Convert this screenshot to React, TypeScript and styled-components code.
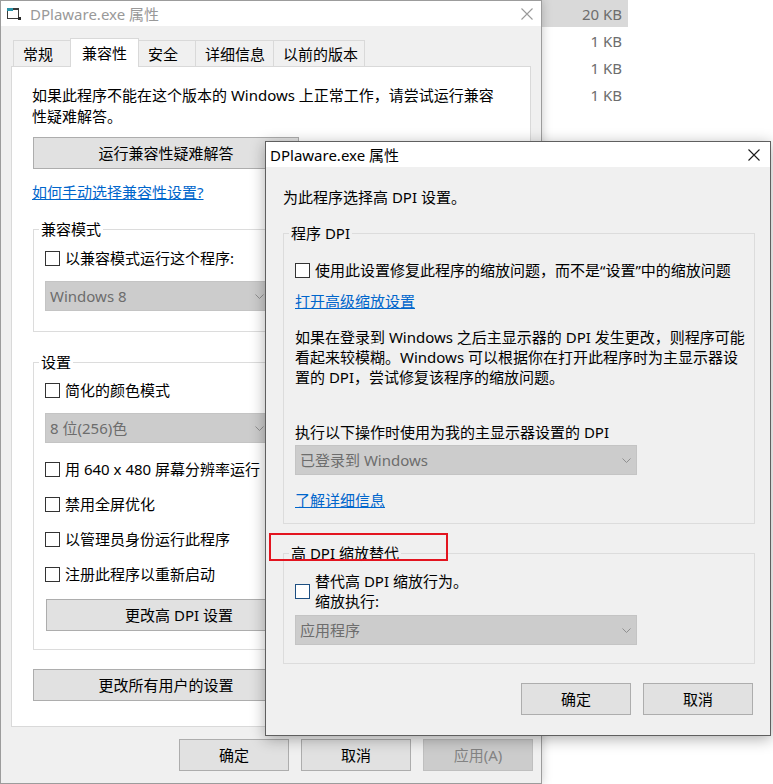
import React from "react";
import styled, { createGlobalStyle } from "styled-components";

const FONT = `"Noto Sans", "Noto Sans CJK SC", sans-serif`;

const GlobalStyle = createGlobalStyle`
  html, body { margin: 0; padding: 0; background: #fff; }
  body { font-family: ${FONT}; font-size: 15px; color: #000; }
  * { box-sizing: border-box; }
`;

const Desktop = styled.div`
  position: relative;
  width: 773px;
  height: 784px;
  overflow: hidden;
  background: #fff;
  font-family: ${FONT};
  font-size: 15px;
  line-height: 20px;
  color: #000;
`;

const FileList = styled.div`
  position: absolute;
  left: 480px;
  top: 0;
  width: 148px;
  display: flex;
  flex-direction: column;
`;

const FileRow = styled.div<{ $selected?: boolean }>`
  height: 27px;
  display: flex;
  align-items: center;
  justify-content: flex-end;
  padding: 1px 6px 0 0;
  color: #6d6d6d;
  background: ${(p) => (p.$selected ? "#d9d9d9" : "transparent")};
`;

const Window = styled.div<{ $x: number; $y: number; $w: number; $h: number; $active?: boolean }>`
  position: absolute;
  left: ${(p) => p.$x}px;
  top: ${(p) => p.$y}px;
  width: ${(p) => p.$w}px;
  height: ${(p) => p.$h}px;
  display: flex;
  flex-direction: column;
  background: #f0f0f0;
  border: 1px solid ${(p) => (p.$active ? "#5f5f5f" : "#9c9c9c")};
  box-shadow: ${(p) =>
    p.$active ? "0 3px 14px rgba(0,0,0,0.32)" : "0 0 10px rgba(0,0,0,0.22)"};
`;

const TitleBar = styled.div<{ $pl: number }>`
  height: 25px;
  flex: none;
  background: #fff;
  display: flex;
  align-items: center;
  padding-left: ${(p) => p.$pl}px;
`;

const TitleText = styled.span<{ $active?: boolean }>`
  flex: 1;
  color: ${(p) => (p.$active ? "#000" : "#999")};
  white-space: nowrap;
  line-height: 20px;
`;

const TitleIcon = styled.svg`
  width: 15px;
  height: 13px;
  margin-right: 9px;
  flex: none;
`;

const CloseGlyph = styled.svg<{ $mr: number }>`
  width: 12px;
  height: 12px;
  margin-right: ${(p) => p.$mr}px;
  flex: none;
`;

const MainBody = styled.div`
  flex: 1;
  display: flex;
  flex-direction: column;
  padding: 12px 10px 0 10px;
`;

const TabRow = styled.div`
  display: flex;
  align-items: flex-end;
  height: 29px;
  padding-left: 2px;
  margin-bottom: -1px;
  position: relative;
  z-index: 1;
`;

const Tab = styled.div<{ $w: number; $active?: boolean }>`
  width: ${(p) => p.$w}px;
  height: ${(p) => (p.$active ? 29 : 27)}px;
  margin-left: -1px;
  &:first-child { margin-left: 0; }
  display: flex;
  align-items: center;
  padding-left: ${(p) => (p.$active ? 11 : 9)}px;
  padding-bottom: ${(p) => (p.$active ? 1 : 0)}px;
  white-space: nowrap;
  background: ${(p) => (p.$active ? "#fff" : "#f0f0f0")};
  border: 1px solid #d9d9d9;
  border-bottom: ${(p) => (p.$active ? "none" : "1px solid #d9d9d9")};
  position: relative;
  z-index: ${(p) => (p.$active ? 2 : 1)};
`;

const TabPanel = styled.div`
  height: 661px;
  flex: none;
  background: #fff;
  border: 1px solid #d9d9d9;
  padding: 18px 20px 0 20px;
  display: flex;
  flex-direction: column;
  align-items: flex-start;
`;

const Text = styled.div<{ $mt?: number; $lh?: number }>`
  margin-top: ${(p) => p.$mt ?? 0}px;
  line-height: ${(p) => p.$lh ?? 20}px;
  white-space: nowrap;
`;

const Link = styled.a<{ $mt?: number }>`
  margin-top: ${(p) => p.$mt ?? 0}px;
  line-height: 20px;
  color: #0066cc;
  text-decoration: underline;
  cursor: pointer;
  white-space: nowrap;
`;

const PushButton = styled.button<{ $w: number; $mt?: number; $ml?: number }>`
  width: ${(p) => p.$w}px;
  height: 32px;
  flex: none;
  margin: ${(p) => p.$mt ?? 0}px 0 0 ${(p) => p.$ml ?? 0}px;
  padding: 0;
  background: #e1e1e1;
  border: 1px solid #adadad;
  font-family: inherit;
  font-size: 15px;
  line-height: 20px;
  color: #000;
  white-space: nowrap;
  &:disabled {
    background: #cccccc;
    border-color: #bfbfbf;
    color: #838383;
  }
`;

const Group = styled.fieldset<{ $mt: number; $ml?: number }>`
  margin: ${(p) => p.$mt}px 0 0 ${(p) => p.$ml ?? 0}px;
  padding: 0;
  border: 1px solid #dcdcdc;
  min-width: 0;
  align-self: stretch;
`;

const Legend = styled.legend`
  margin-left: 5px;
  padding: 0 2px;
  height: 20px;
  line-height: 20px;
  white-space: nowrap;
`;

const GroupBody = styled.div<{ $pt: number; $pb: number }>`
  display: flex;
  flex-direction: column;
  align-items: flex-start;
  padding: ${(p) => p.$pt}px 11px ${(p) => p.$pb}px 11px;
`;

const CheckRow = styled.label<{ $mt?: number }>`
  display: flex;
  align-items: center;
  gap: 5px;
  margin-top: ${(p) => p.$mt ?? 0}px;
  line-height: 20px;
  white-space: nowrap;
`;

const CheckBox = styled.span<{ $focus?: boolean }>`
  width: 15px;
  height: 15px;
  flex: none;
  background: #fff;
  border: 1px solid ${(p) => (p.$focus ? "#1d4f82" : "#333")};
`;

const Combo = styled.div<{ $w: number; $mt?: number }>`
  width: ${(p) => p.$w}px;
  height: 30px;
  flex: none;
  margin-top: ${(p) => p.$mt ?? 0}px;
  background: #cccccc;
  border: 1px solid #c4c4c4;
  display: flex;
  align-items: center;
  justify-content: space-between;
  padding: 0 5px 0 4px;
  color: #6d6d6d;
  white-space: nowrap;
`;

const Chevron = styled.svg`
  width: 9px;
  height: 5px;
  flex: none;
`;

const Footer = styled.div<{ $mt: number; $mr: number }>`
  align-self: stretch;
  display: flex;
  justify-content: flex-end;
  gap: 12px;
  margin-top: ${(p) => p.$mt}px;
  margin-right: ${(p) => p.$mr}px;
`;

const DialogBody = styled.div`
  flex: 1;
  display: flex;
  flex-direction: column;
  align-items: flex-start;
  padding: 20px 15px 0 17px;
`;

const Highlight = styled.div`
  position: absolute;
  left: 269px;
  top: 533px;
  width: 179px;
  height: 28px;
  border: 2px solid #e3141f;
  pointer-events: none;
`;

const ComboBox = ({ value, w, mt }: { value: string; w: number; mt?: number }) => (
  <Combo $w={w} $mt={mt}>
    <span>{value}</span>
    <Chevron viewBox="0 0 9 5">
      <polyline points="0.5,0.5 4.5,4.5 8.5,0.5" fill="none" stroke="#8f8f8f" strokeWidth="1" />
    </Chevron>
  </Combo>
);

const Close = ({ color, mr }: { color: string; mr: number }) => (
  <CloseGlyph $mr={mr} viewBox="0 0 12 12">
    <path d="M0.5 0.5 L11.5 11.5 M11.5 0.5 L0.5 11.5" stroke={color} strokeWidth="1.1" fill="none" />
  </CloseGlyph>
);

export default function App() {
  return (
    <>
      <GlobalStyle />
      <Desktop>
        <FileList>
          <FileRow $selected>20 KB</FileRow>
          <FileRow>1 KB</FileRow>
          <FileRow>1 KB</FileRow>
          <FileRow>1 KB</FileRow>
        </FileList>

        <Window $x={0} $y={0} $w={542} $h={784}>
          <TitleBar $pl={5}>
            <TitleIcon viewBox="0 0 15 13">
              <rect x="1.5" y="1.5" width="11" height="10" fill="#fff" stroke="#3a3a3a" />
              <rect x="1" y="1" width="6" height="3" fill="#2b93a8" />
              <rect x="7" y="1" width="6" height="2" fill="#3a3a3a" />
              <rect x="12" y="10" width="3" height="3" fill="#2a2a2a" />
            </TitleIcon>
            <TitleText>DPlaware.exe 属性</TitleText>
            <Close color="#9a9a9a" mr={8} />
          </TitleBar>
          <MainBody>
            <TabRow>
              <Tab $w={58}>常规</Tab>
              <Tab $w={69} $active>
                兼容性
              </Tab>
              <Tab $w={58}>安全</Tab>
              <Tab $w={79}>详细信息</Tab>
              <Tab $w={92}>以前的版本</Tab>
            </TabRow>
            <TabPanel>
              <Text $lh={21}>
                如果此程序不能在这个版本的 Windows 上正常工作，请尝试运行兼容
                <br />
                性疑难解答。
              </Text>
              <PushButton $w={266} $mt={10} $ml={1}>
                运行兼容性疑难解答
              </PushButton>
              <Link $mt={13}>如何手动选择兼容性设置?</Link>

              <Group $mt={17} $ml={1}>
                <Legend>兼容模式</Legend>
                <GroupBody $pt={9} $pb={20}>
                  <CheckRow>
                    <CheckBox />
                    以兼容模式运行这个程序:
                  </CheckRow>
                  <ComboBox value="Windows 8" w={225} mt={13} />
                </GroupBody>
              </Group>

              <Group $mt={20} $ml={1}>
                <Legend>设置</Legend>
                <GroupBody $pt={8} $pb={18}>
                  <CheckRow>
                    <CheckBox />
                    简化的颜色模式
                  </CheckRow>
                  <ComboBox value="8 位(256)色" w={225} mt={13} />
                  <CheckRow $mt={16}>
                    <CheckBox />
                    用 640 x 480 屏幕分辨率运行
                  </CheckRow>
                  <CheckRow $mt={15}>
                    <CheckBox />
                    禁用全屏优化
                  </CheckRow>
                  <CheckRow $mt={15}>
                    <CheckBox />
                    以管理员身份运行此程序
                  </CheckRow>
                  <CheckRow $mt={15}>
                    <CheckBox />
                    注册此程序以重新启动
                  </CheckRow>
                  <PushButton $w={266} $mt={15} $ml={1}>
                    更改高 DPI 设置
                  </PushButton>
                </GroupBody>
              </Group>

              <PushButton $w={266} $mt={19} $ml={1}>
                更改所有用户的设置
              </PushButton>
            </TabPanel>
            <Footer $mt={12} $mr={-2}>
              <PushButton $w={110}>确定</PushButton>
              <PushButton $w={110}>取消</PushButton>
              <PushButton $w={110} disabled>
                应用(A)
              </PushButton>
            </Footer>
          </MainBody>
        </Window>

        <Window $x={265} $y={141} $w={506} $h={595} $active>
          <TitleBar $pl={4}>
            <TitleText $active>DPlaware.exe 属性</TitleText>
            <Close color="#1a1a1a" mr={10} />
          </TitleBar>
          <DialogBody>
            <Text>为此程序选择高 DPI 设置。</Text>

            <Group $mt={16}>
              <Legend>程序 DPI</Legend>
              <GroupBody $pt={17} $pb={13}>
                <CheckRow>
                  <CheckBox />
                  使用此设置修复此程序的缩放问题，而不是“设置”中的缩放问题
                </CheckRow>
                <Link $mt={11}>打开高级缩放设置</Link>
                <Text $mt={16}>
                  如果在登录到 Windows 之后主显示器的 DPI 发生更改，则程序可能
                  <br />
                  看起来较模糊。Windows 可以根据你在打开此程序时为主显示器设
                  <br />
                  置的 DPI，尝试修复该程序的缩放问题。
                </Text>
                <Text $mt={35}>执行以下操作时使用为我的主显示器设置的 DPI</Text>
                <ComboBox value="已登录到 Windows" w={342} mt={3} />
                <Link $mt={15}>了解详细信息</Link>
              </GroupBody>
            </Group>

            <Group $mt={19}>
              <Legend>高 DPI 缩放替代</Legend>
              <GroupBody $pt={8} $pb={18}>
                <CheckRow>
                  <CheckBox $focus />
                  <span>
                    替代高 DPI 缩放行为。
                    <br />
                    缩放执行:
                  </span>
                </CheckRow>
                <ComboBox value="应用程序" w={342} mt={4} />
              </GroupBody>
            </Group>

            <Footer $mt={19} $mr={2}>
              <PushButton $w={110}>确定</PushButton>
              <PushButton $w={110}>取消</PushButton>
            </Footer>
          </DialogBody>
        </Window>

        <Highlight />
      </Desktop>
    </>
  );
}
